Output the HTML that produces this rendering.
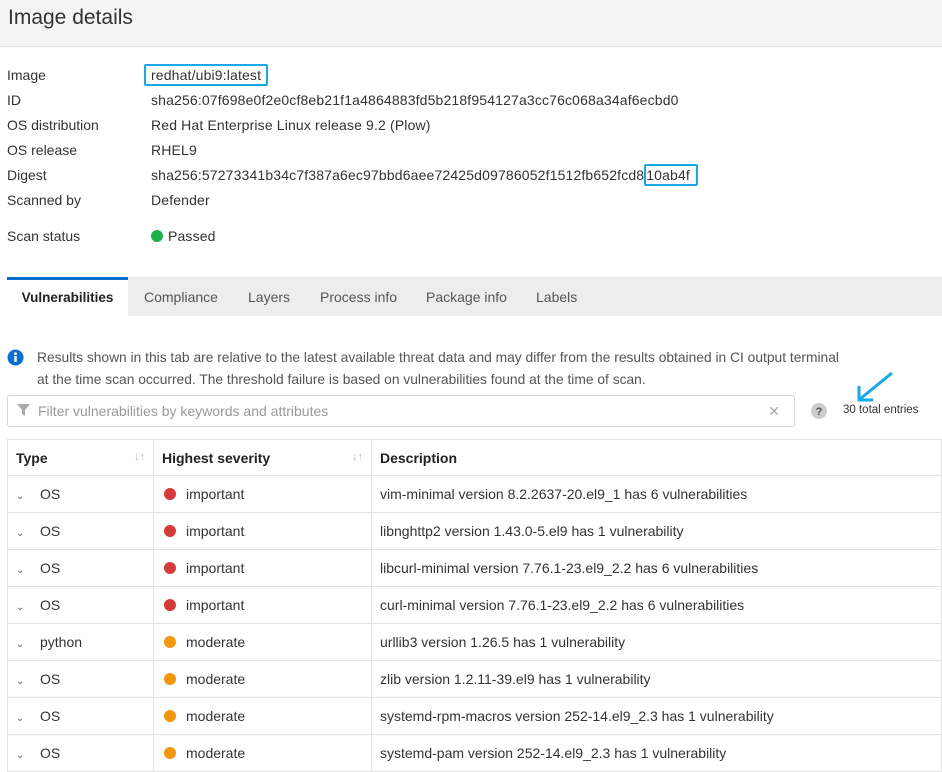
<!DOCTYPE html>
<html><head><meta charset="utf-8">
<style>
*{box-sizing:border-box;margin:0;padding:0}
body{width:942px;height:769px;overflow:hidden;background:#fff;font-family:"Liberation Sans",sans-serif;font-size:14px;color:#333}
.hdr{height:47px;background:#f5f5f5;border-bottom:1px solid #e3e3e3;padding:6px 8px;font-size:21px;color:#333}
.row{position:absolute;left:7px;font-size:14px;color:#333}
.row span{position:absolute;left:144px;top:0;white-space:nowrap;font-size:14px;letter-spacing:0.15px}
.hl{border:2px solid #1aa7e6;border-radius:2px;padding:1px 5px 1px 5px;margin-left:-7px}
.hl2{border:2px solid #1aa7e6;border-radius:2px;padding:1px 6px 1px 0}
.tabs{position:absolute;top:277px;left:7px;width:935px;height:39px;background:#ededed}
.tab{position:absolute;top:0;height:39px;line-height:41px;font-size:14px;color:#555}
.tab.act{background:#fff;border-top:3px solid #0a6ed1;line-height:36px;color:#222;font-weight:bold;left:0;width:121px;text-align:center;font-size:13.5px}
.info{position:absolute;top:347px;left:37px;font-size:13.8px;color:#555;line-height:22px;width:880px}
.filter{position:absolute;top:395px;left:7px;width:788px;height:32px;border:1px solid #d4d4d4;border-radius:3px;color:#999;font-size:14px;line-height:30px;padding-left:30px}
table{position:absolute;top:439px;left:7px;width:935px;border-collapse:collapse;font-size:14px;color:#333}
td,th{border:1px solid #e3e3e3;height:37px;padding:0 8px;text-align:left;white-space:nowrap}
th{font-weight:bold;color:#222;position:relative;height:36px}
.dot{display:inline-block;width:12px;height:12px;border-radius:50%;vertical-align:-1px;margin-right:10px;margin-left:2px}
.r{background:#d63b3b}.o{background:#f2960d}
.chev{display:inline-block;width:24px;color:#666;font-size:10px}
.sort{position:absolute;right:8px;top:11px;color:#bbb;font-size:11px}
</style></head><body>
<div class="hdr">Image details</div>
<div class="row" style="top:67px">Image<span><b class="hl" style="font-weight:normal">redhat/ubi9:latest</b></span></div>
<div class="row" style="top:92px">ID<span>sha256:07f698e0f2e0cf8eb21f1a4864883fd5b218f954127a3cc76c068a34af6ecbd0</span></div>
<div class="row" style="top:117px">OS distribution<span>Red Hat Enterprise Linux release 9.2 (Plow)</span></div>
<div class="row" style="top:142px">OS release<span>RHEL9</span></div>
<div class="row" style="top:167px">Digest<span>sha256:57273341b34c7f387a6ec97bbd6aee72425d09786052f1512fb652fcd8<b class="hl2" style="font-weight:normal">10ab4f</b></span></div>
<div class="row" style="top:192px">Scanned by<span>Defender</span></div>
<div class="row" style="top:228px">Scan status<span><i class="dot" style="background:#20b24a;margin:0 5px 0 0"></i>Passed</span></div>

<div class="tabs">
<div class="tab act">Vulnerabilities</div>
<div class="tab" style="left:137px">Compliance</div>
<div class="tab" style="left:241px">Layers</div>
<div class="tab" style="left:313px">Process info</div>
<div class="tab" style="left:419px">Package info</div>
<div class="tab" style="left:529px">Labels</div>
</div>

<svg style="position:absolute;left:7px;top:349px" width="17" height="17" viewBox="0 0 17 17"><circle cx="8.5" cy="8.5" r="8" fill="#0a6ed1"/><rect x="7.3" y="7" width="2.4" height="6" fill="#fff"/><circle cx="8.5" cy="4.7" r="1.4" fill="#fff"/></svg>
<div class="info">Results shown in this tab are relative to the latest available threat data and may differ from the results obtained in CI output terminal<br>at the time scan occurred. The threshold failure is based on vulnerabilities found at the time of scan.</div>

<div class="filter">Filter vulnerabilities by keywords and attributes<span style="position:absolute;right:14px;color:#aaa;font-size:14px">✕</span></div>
<svg style="position:absolute;left:17px;top:404px" width="13" height="13" viewBox="0 0 13 13"><path d="M0 0H13L8 6V12L5 10V6Z" fill="#aaa"/></svg>
<svg style="position:absolute;left:811px;top:403px" width="16" height="16"><circle cx="8" cy="8" r="8" fill="#ccc"/><text x="8" y="12" font-size="11" font-weight="bold" text-anchor="middle" fill="#555" font-family="Liberation Sans">?</text></svg>
<div style="position:absolute;left:843px;top:404px;font-size:11.5px;color:#333">30 total entries</div>
<svg style="position:absolute;left:855px;top:370px" width="40" height="34"><path d="M37 3L5 29" stroke="#1aa7e6" stroke-width="3"/><path d="M4 16L4 30L18 30" stroke="#1aa7e6" stroke-width="3" fill="none"/></svg>

<table>
<tr><th style="width:146px">Type<span class="sort">↓↑</span></th><th style="width:218px">Highest severity<span class="sort">↓↑</span></th><th>Description</th></tr>
<tr><td><span class="chev">⌄</span>OS</td><td><i class="dot r"></i>important</td><td>vim-minimal version 8.2.2637-20.el9_1 has 6 vulnerabilities</td></tr>
<tr><td><span class="chev">⌄</span>OS</td><td><i class="dot r"></i>important</td><td>libnghttp2 version 1.43.0-5.el9 has 1 vulnerability</td></tr>
<tr><td><span class="chev">⌄</span>OS</td><td><i class="dot r"></i>important</td><td>libcurl-minimal version 7.76.1-23.el9_2.2 has 6 vulnerabilities</td></tr>
<tr><td><span class="chev">⌄</span>OS</td><td><i class="dot r"></i>important</td><td>curl-minimal version 7.76.1-23.el9_2.2 has 6 vulnerabilities</td></tr>
<tr><td><span class="chev">⌄</span>python</td><td><i class="dot o"></i>moderate</td><td>urllib3 version 1.26.5 has 1 vulnerability</td></tr>
<tr><td><span class="chev">⌄</span>OS</td><td><i class="dot o"></i>moderate</td><td>zlib version 1.2.11-39.el9 has 1 vulnerability</td></tr>
<tr><td><span class="chev">⌄</span>OS</td><td><i class="dot o"></i>moderate</td><td>systemd-rpm-macros version 252-14.el9_2.3 has 1 vulnerability</td></tr>
<tr><td><span class="chev">⌄</span>OS</td><td><i class="dot o"></i>moderate</td><td>systemd-pam version 252-14.el9_2.3 has 1 vulnerability</td></tr>
</table>
</body></html>
